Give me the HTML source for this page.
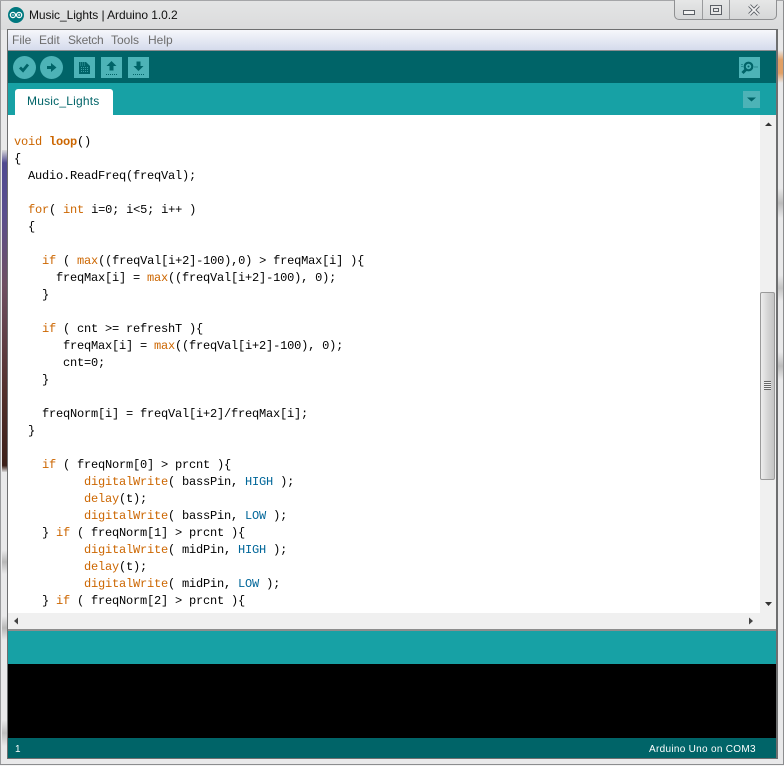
<!DOCTYPE html>
<html><head><meta charset="utf-8">
<style>
html,body{margin:0;padding:0;}
body{width:784px;height:766px;overflow:hidden;position:relative;background:#e9e9ea;font-family:"Liberation Sans",sans-serif;}
.a{position:absolute;}
.code{left:14px;top:115px;width:746px;height:498px;overflow:hidden;position:absolute;}
pre{position:absolute;left:0;margin:0;font:12px/17px "Liberation Mono",monospace;letter-spacing:-0.2px;color:#000;white-space:pre;}
i{font-style:normal;color:#cc6600;}
b{color:#cc6600;font-weight:bold;}
u{text-decoration:none;color:#006699;}
</style></head><body>
<!-- outer frame -->
<div class="a" style="left:0;top:0;width:784px;height:30px;background:linear-gradient(#e4e5e5,#dadbdc);"></div>
<div class="a" style="left:0;top:0;width:1px;height:766px;background:#9a9b9d;"></div>
<div class="a" style="left:783px;top:0;width:1px;height:766px;background:#8c8d8f;"></div>
<div class="a" style="left:0;top:0;width:784px;height:1px;background:#a5a6a8;"></div>
<!-- desktop bleed through glass -->
<div class="a" style="left:2px;top:150px;width:5px;height:322px;background:linear-gradient(#d8d8da,#4f4a90 4%,#5a4f8e 20%,#6f4f62 42%,#53302c 75%,#3c2019 98%,#d8d8d8);"></div>
<div class="a" style="left:2px;top:550px;width:5px;height:24px;background:linear-gradient(#e9e9ea,#b8b8b8,#e9e9ea);"></div>
<div class="a" style="left:2px;top:616px;width:5px;height:24px;background:linear-gradient(#e9e9ea,#b8b8b8,#e9e9ea);"></div>
<div class="a" style="left:2px;top:720px;width:5px;height:26px;background:linear-gradient(#e9e9ea,#c0c0c0,#e9e9ea);"></div>
<div class="a" style="left:778px;top:50px;width:5px;height:33px;background:linear-gradient(#e9e9ea,#e2a065 30%,#e2a065 70%,#e9e9ea);"></div>
<div class="a" style="left:778px;top:188px;width:5px;height:30px;background:linear-gradient(#e9e9ea,#bcbcbc,#e9e9ea);"></div>
<div class="a" style="left:778px;top:275px;width:5px;height:26px;background:linear-gradient(#e9e9ea,#c4c4c4,#e9e9ea);"></div>
<div class="a" style="left:778px;top:352px;width:5px;height:28px;background:linear-gradient(#e9e9ea,#bcbcbc,#e9e9ea);"></div>
<div class="a" style="left:0;top:764px;width:784px;height:1px;background:#8c8d8f;"></div>
<div class="a" style="left:0;top:765px;width:784px;height:1px;background:#f4f4f4;"></div>
<!-- title -->
<svg class="a" style="left:8px;top:7px" width="16" height="16" viewBox="0 0 16 16">
<circle cx="8" cy="8" r="8" fill="#00787f"/>
<circle cx="4.900" cy="8" r="2.600" fill="none" stroke="#fff" stroke-width="1.200"/>
<circle cx="11.100" cy="8" r="2.600" fill="none" stroke="#fff" stroke-width="1.200"/>
<path d="M3.700 8h2.400M9.900 8h2.400M11.100 6.800v2.400" stroke="#fff" stroke-width=".8"/>
</svg>
<div class="a" style="left:29px;top:7px;font-size:12px;line-height:16px;letter-spacing:-.07px;color:#111;white-space:nowrap;">Music_Lights | Arduino 1.0.2</div>
<!-- window buttons -->
<div class="a" style="left:674px;top:0;width:103px;height:20px;box-sizing:border-box;border:1px solid #8f9092;border-top:0;border-radius:0 0 5px 5px;background:linear-gradient(#e6e7e7,#d6d7d8);"></div>
<div class="a" style="left:702px;top:0;width:1px;height:19px;background:#9a9b9d;"></div>
<div class="a" style="left:729px;top:0;width:1px;height:19px;background:#9a9b9d;"></div>
<div class="a" style="left:683px;top:10px;width:12px;height:5px;box-sizing:border-box;border:1px solid #5c6066;background:#f2f2f2;"></div>
<div class="a" style="left:710px;top:5px;width:12px;height:10px;box-sizing:border-box;border:1px solid #5c6066;background:#e8e8e8;"></div>
<div class="a" style="left:713px;top:8px;width:6px;height:4px;box-sizing:border-box;border:1px solid #5c6066;"></div>
<svg class="a" style="left:747px;top:4px" width="14" height="12" viewBox="0 0 14 12"><path d="M2.500 1.500l9 9M11.500 1.500l-9 9" stroke="#5c6066" stroke-width="3.600"/><path d="M2.500 1.500l9 9M11.500 1.500l-9 9" stroke="#f2f2f2" stroke-width="1.800"/></svg>
<!-- client frame -->
<div class="a" style="left:7px;top:29px;width:771px;height:730px;box-sizing:border-box;border:1px solid #6e6f70;border-right-width:2px;background:#fff;"></div>
<!-- menu -->
<div class="a" style="left:8px;top:30px;width:768px;height:20px;background:linear-gradient(#f6f7fb,#d5dbec);"></div>
<div class="a" style="left:8px;top:50px;width:768px;height:1px;background:#8a8d90;"></div>
<div class="a" style="left:12px;top:33px;font-size:12px;line-height:14px;color:#6d6d6d;white-space:nowrap;">File</div>
<div class="a" style="left:39px;top:33px;font-size:12px;line-height:14px;color:#6d6d6d;white-space:nowrap;">Edit</div>
<div class="a" style="left:68px;top:33px;font-size:12px;line-height:14px;letter-spacing:-.2px;color:#6d6d6d;white-space:nowrap;">Sketch</div>
<div class="a" style="left:111px;top:33px;font-size:12px;line-height:14px;color:#6d6d6d;white-space:nowrap;">Tools</div>
<div class="a" style="left:148px;top:33px;font-size:12px;line-height:14px;color:#6d6d6d;white-space:nowrap;">Help</div>
<!-- toolbar -->
<div class="a" style="left:8px;top:51px;width:768px;height:32px;background:#006468;"></div>
<svg class="a" style="left:8px;top:51px" width="150" height="32" viewBox="0 0 150 32">
<circle cx="16.500" cy="16.500" r="11.500" fill="#4db3b7"/>
<circle cx="43.500" cy="16.500" r="11.500" fill="#4db3b7"/>
<path d="M12 16.500l3 3 5-6" fill="none" stroke="#006468" stroke-width="2.800"/>
<path d="M39 15h4v-3l5.500 4.500-5.500 4.500v-3h-4z" fill="#006468"/>
<rect x="66" y="6" width="21" height="21" fill="#4db3b7"/>
<rect x="93" y="6" width="21" height="21" fill="#4db3b7"/>
<rect x="120" y="6" width="21" height="21" fill="#4db3b7"/>
<path d="M71 11h7l4 4v8H71z" fill="#006468"/>
<path d="M72 12h5M72 14h5M73 16.500h8M73 18.500h8M73 20.500h8" stroke="#4db3b7" stroke-width=".7" stroke-dasharray="1 1"/>
<path d="M103.500 10l5 5h-3v4.500h-4V15h-3z" fill="#006468"/>
<path d="M98 23.500h12" stroke="#006468" stroke-width="1" stroke-dasharray="1 1"/>
<path d="M128.500 10.500h4V15h3l-5 5-5-5h3z" fill="#006468"/>
<path d="M125 23.500h12" stroke="#006468" stroke-width="1" stroke-dasharray="1 1"/>
</svg>
<svg class="a" style="left:739px;top:57px" width="21" height="21" viewBox="0 0 21 21">
<rect width="21" height="21" fill="#4db3b7"/>
<circle cx="9.500" cy="9.500" r="3.800" fill="none" stroke="#006468" stroke-width="2.200"/>
<circle cx="9.500" cy="9.500" r="1" fill="#006468"/>
<path d="M7 12.500l-3.500 3.500" stroke="#006468" stroke-width="3"/>
<path d="M15.500 10h4M3 7v4" stroke="#006468" stroke-width="1" stroke-dasharray="1 1"/>
</svg>
<!-- tab header -->
<div class="a" style="left:8px;top:83px;width:768px;height:32px;background:#17a1a5;"></div>
<div class="a" style="left:15px;top:89px;width:98px;height:26px;background:#fff;border-radius:3px 3px 0 0;"></div>
<div class="a" style="left:27px;top:94px;font-size:12px;line-height:14px;letter-spacing:.2px;color:#006468;white-space:nowrap;">Music_Lights</div>
<div class="a" style="left:743px;top:91px;width:17px;height:17px;background:#4db3b7;"></div>
<svg class="a" style="left:743px;top:91px" width="17" height="17"><path d="M4 6.500h9l-4.500 4z" fill="#006468"/></svg>
<!-- code -->
<div class="code">
<pre style="top:19px"><i>void</i> <b>loop</b>()
{
  Audio.ReadFreq(freqVal);

  <i>for</i>( <i>int</i> i=0; i&lt;5; i++ )
  {

    <i>if</i> ( <i>max</i>((freqVal[i+2]-100),0) &gt; freqMax[i] ){
      freqMax[i] = <i>max</i>((freqVal[i+2]-100), 0);
    }

    <i>if</i> ( cnt &gt;= refreshT ){
       freqMax[i] = <i>max</i>((freqVal[i+2]-100), 0);
       cnt=0;
    }

    freqNorm[i] = freqVal[i+2]/freqMax[i];
  }

    <i>if</i> ( freqNorm[0] &gt; prcnt ){
          <i>digitalWrite</i>( bassPin, <u>HIGH</u> );
          <i>delay</i>(t);
          <i>digitalWrite</i>( bassPin, <u>LOW</u> );
    } <i>if</i> ( freqNorm[1] &gt; prcnt ){
          <i>digitalWrite</i>( midPin, <u>HIGH</u> );
          <i>delay</i>(t);
          <i>digitalWrite</i>( midPin, <u>LOW</u> );
    } <i>if</i> ( freqNorm[2] &gt; prcnt ){</pre>
</div>
<!-- v scrollbar -->
<div class="a" style="left:760px;top:115px;width:16px;height:498px;background:#f0f0f0;"></div>
<svg class="a" style="left:760px;top:115px" width="16" height="14"><path d="M5 11h7l-3.500-3.500z" fill="#333"/></svg>
<svg class="a" style="left:760px;top:597px" width="16" height="12"><path d="M5 5h7l-3.500 4z" fill="#333"/></svg>
<div class="a" style="left:760px;top:292px;width:15px;height:188px;box-sizing:border-box;border:1px solid #9a9a9a;border-radius:2px;background:linear-gradient(90deg,#ededed,#d6d6d6 50%,#c4c4c4);"></div>
<div class="a" style="left:764px;top:381px;width:7px;height:9px;background:repeating-linear-gradient(#666 0 1px,#eee 1px 2px);"></div>
<!-- h scrollbar -->
<div class="a" style="left:8px;top:613px;width:768px;height:16px;background:#f0f0f0;"></div>
<svg class="a" style="left:8px;top:613px" width="14" height="16"><path d="M10 4.500v7l-4-3.500z" fill="#444"/></svg>
<svg class="a" style="left:744px;top:613px" width="14" height="16"><path d="M5 4.500v7l4-3.500z" fill="#444"/></svg>
<div class="a" style="left:8px;top:629px;width:768px;height:2px;background:#8d8d8d;"></div>
<!-- status bars -->
<div class="a" style="left:8px;top:631px;width:768px;height:33px;background:#17a1a5;"></div>
<div class="a" style="left:8px;top:664px;width:768px;height:74px;background:#000;"></div>
<div class="a" style="left:8px;top:738px;width:768px;height:20px;background:#006468;"></div>
<div class="a" style="left:15px;top:744px;font-size:10px;line-height:11px;color:#fff;">1</div>
<div class="a" style="left:649px;top:744px;font-size:10px;line-height:11px;letter-spacing:.3px;color:#fff;white-space:nowrap;">Arduino Uno on COM3</div>
</body></html>
